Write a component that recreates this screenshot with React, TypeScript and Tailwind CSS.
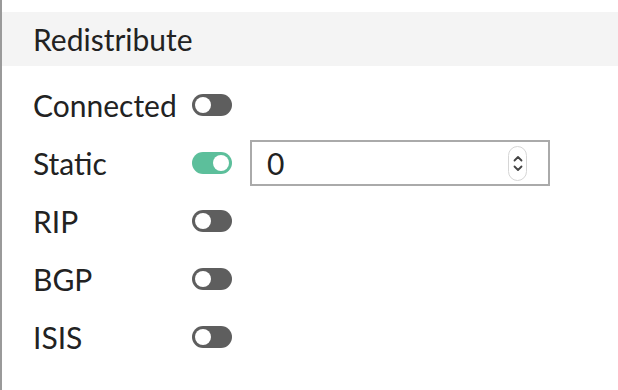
import React from "react";

function Toggle({ on }: { on?: boolean }) {
  return (
    <div
      className={`relative h-[22px] w-[40px] shrink-0 rounded-full ${on ? "bg-[#5cbf9b]" : "bg-[#5e5e5e]"}`}
    >
      <div
        className={`absolute top-[3px] h-[16px] w-[16px] rounded-full bg-white ${on ? "right-[3px]" : "left-[3px]"}`}
      />
    </div>
  );
}

function Row({ label, on, children }: { label: string; on?: boolean; children?: React.ReactNode }) {
  return (
    <div className="flex h-[46px] items-center">
      <div className="w-[159px] text-[30px] leading-none text-[#222]">{label}</div>
      <Toggle on={on} />
      {children}
    </div>
  );
}

export default function App() {
  return (
    <div
      className="h-[390px] w-[618px] border-l-2 border-[#9a9a9a] bg-white pt-[12px]"
      style={{ fontFamily: "Lato, 'Noto Sans', sans-serif" }}
    >
      <div className="flex h-[54px] items-center bg-[#f4f4f4] pl-[31px] text-[30px] leading-none text-[#222]">
        Redistribute
      </div>
      <div className="flex flex-col gap-[12px] pl-[31px] pt-[16px]">
        <Row label="Connected" />
        <Row label="Static" on>
          <div className="ml-[18px] flex h-[46px] w-[300px] items-center border-2 border-[#aaaaaa] pl-[15px] pr-[21px]">
            <span className="flex-1 text-[30px] leading-none text-[#222]">0</span>
            <div className="flex h-[35px] w-[19px] flex-col items-center justify-center gap-[3px] rounded-full border border-[#d6d6d6]">
              <svg width="10" height="7" viewBox="0 0 10 7">
                <path d="M1.5 5.5 L5 2 L8.5 5.5" fill="none" stroke="#444" strokeWidth="1.8" strokeLinecap="round" strokeLinejoin="round" />
              </svg>
              <svg width="10" height="7" viewBox="0 0 10 7">
                <path d="M1.5 1.5 L5 5 L8.5 1.5" fill="none" stroke="#444" strokeWidth="1.8" strokeLinecap="round" strokeLinejoin="round" />
              </svg>
            </div>
          </div>
        </Row>
        <Row label="RIP" />
        <Row label="BGP" />
        <Row label="ISIS" />
      </div>
    </div>
  );
}
